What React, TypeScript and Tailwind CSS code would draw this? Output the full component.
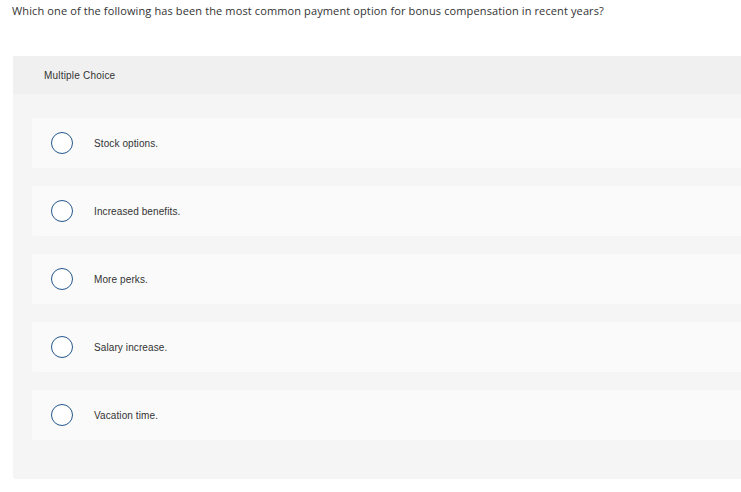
const OPTIONS = ['Stock options.', 'Increased benefits.', 'More perks.', 'Salary increase.', 'Vacation time.']

export default function App() {
  return (
    <div className="w-[741px] h-[492px] overflow-hidden bg-white text-[#333] font-['Liberation_Sans',Arial,sans-serif]">
      <p className="pl-[12px] pt-[3px] text-[11px] leading-[15px] tracking-[0.12px] text-[#333] font-['Open_Sans',sans-serif]">
        Which one of the following has been the most common payment option for bonus compensation in recent years?
      </p>

      <div className="ml-[13px] mt-[38px] w-[740px] rounded-bl-[3px] bg-[#f5f5f5] pb-[39px]">
        {/* header */}
        <div className="h-[38px] bg-[#f0f0f0] pl-[31px] flex items-center text-[10px] tracking-[0.2px] text-[#333]">
          Multiple Choice
        </div>

        {/* options */}
        <div className="pt-[24px] pl-[19px] flex flex-col gap-[18px]">
          {OPTIONS.map(o => (
            <div key={o} className="h-[50px] bg-[#fafafa] rounded-l-[3px] flex items-center pl-[19px]">
              <span className="w-[22px] h-[22px] rounded-full border-[1.5px] border-[#24578d] bg-white" />
              <span className="ml-[21px] text-[10px] tracking-[0.1px] text-[#333]">{o}</span>
            </div>
          ))}
        </div>
      </div>
    </div>
  )
}
